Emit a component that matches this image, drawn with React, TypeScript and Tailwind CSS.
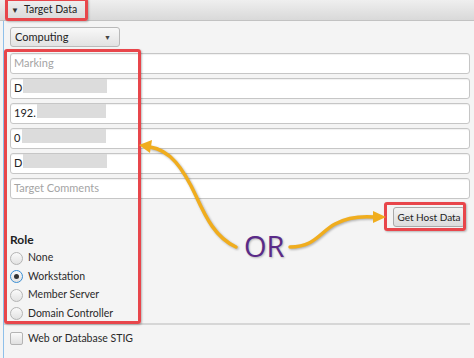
import React from 'react';

const FIELD =
  'h-[21px] w-full rounded-[3px] border border-[#c6c6c6] bg-white px-[3px] flex items-center text-[11px] shadow-[inset_0_1px_1px_rgba(0,0,0,0.06)]';

function Redacted({ w }: { w: number }) {
  return <span className="inline-block h-[14px] bg-[#dcdcdc] blur-[0.6px]" style={{ width: w }} />;
}

function Radio({ label, checked }: { label: string; checked?: boolean }) {
  return (
    <div className="flex items-center h-[18.5px] gap-[5px]">
      <span
        className={`w-[13px] h-[13px] rounded-full flex items-center justify-center bg-gradient-to-b from-[#fafafa] to-[#e2e2e2] ${
          checked ? 'border-[1.5px] border-[#3b8fd4]' : 'border border-[#b4b4b4]'
        }`}
      >
        {checked && <span className="w-[5px] h-[5px] rounded-full bg-[#333]" />}
      </span>
      <span className="text-[#2a2a2a]">{label}</span>
    </div>
  );
}

export default function App() {
  return (
    <div
      className="relative w-[474px] h-[358px] overflow-hidden bg-[#f4f4f4] text-[#222] text-[10.5px]"
      style={{ fontFamily: 'Lato, "Open Sans", sans-serif' }}
    >
      {/* title bar */}
      <div className="h-[21px] flex items-center pl-[11px] gap-[5px] text-[10.5px] bg-gradient-to-b from-[#efefef] to-[#d9d9d9] border-b border-[#c2c2c2]">
        <span className="text-[8px] text-[#333]">▼</span>
        <span>Target Data</span>
      </div>

      <div className="ml-[3px] border-l border-[#8fc0ea] h-[337px] pl-[6px] pr-[4px] pt-[6px]">
        <div className="w-[110px] h-[20px] rounded-[3px] border border-[#b9b9b9] bg-gradient-to-b from-[#f8f8f8] to-[#e2e2e2] flex items-center justify-between px-[4px] text-[11px]">
          <span>Computing</span>
          <span className="text-[7px] text-[#444] mr-[4px]">▼</span>
        </div>

        <div className="mt-[6px] flex flex-col gap-[4px]">
          <div className={FIELD}>
            <span className="text-[#a4a4a4]">Marking</span>
          </div>
          <div className={FIELD}>
            <span>D</span>
            <span className="ml-[1px]"><Redacted w={84} /></span>
          </div>
          <div className={FIELD}>
            <span>192.</span>
            <span className="ml-[1px]"><Redacted w={69} /></span>
          </div>
          <div className={FIELD}>
            <span>0</span>
            <span className="ml-[2px]"><Redacted w={84} /></span>
          </div>
          <div className={FIELD}>
            <span>D</span>
            <span className="ml-[1px]"><Redacted w={84} /></span>
          </div>
          <div className={FIELD}>
            <span className="text-[#a4a4a4]">Target Comments</span>
          </div>
        </div>

        <div className="flex justify-end mt-[8px] pr-[5px]">
          <button className="w-[72px] h-[20px] whitespace-nowrap flex items-center justify-center rounded-[3px] border border-[#a9a9a9] bg-gradient-to-b from-[#f4f4f4] to-[#dcdcdc] text-[10px]">
            Get Host Data
          </button>
        </div>

        <div className="mt-[5px] font-bold text-[12px] leading-[16px]">Role</div>
        <div className="mt-[1px]">
          <Radio label="None" />
          <Radio label="Workstation" checked />
          <Radio label="Member Server" />
          <Radio label="Domain Controller" />
        </div>

        <div className="-ml-[6px] border-t-2 border-[#d6d6d6]" />
        <div className="mt-[6px] flex items-center gap-[5px]">
          <span className="w-[13px] h-[13px] rounded-[2px] border border-[#b4b4b4] bg-gradient-to-b from-[#fafafa] to-[#e0e0e0]" />
          <span className="text-[#2a2a2a]">Web or Database STIG</span>
        </div>
      </div>

      {/* annotations */}
      <div className="absolute left-[5px] top-[-2px] w-[83px] h-[23px] border-[3px] border-[#e8464b] rounded-[3px] shadow-[1px_1px_2px_rgba(0,0,0,0.25)]" />
      <div className="absolute left-[4px] top-[49px] w-[137px] h-[275px] border-[3px] border-[#e8464b] rounded-[3px] shadow-[1px_1px_2px_rgba(0,0,0,0.25)]" />
      <div className="absolute left-[384px] top-[202px] w-[82px] h-[29px] border-[3px] border-[#e8464b] rounded-[3px] shadow-[1px_1px_2px_rgba(0,0,0,0.25)]" />

      <svg className="absolute left-0 top-0" width="474" height="358">
        <g stroke="#f0ad1e" strokeWidth="3.5" fill="none" strokeLinecap="round" style={{ filter: 'drop-shadow(1px 1px 1px rgba(0,0,0,0.3))' }}>
          <path d="M236,247 C 216,238 206,218 196,196 C 183,168 170,150 150,147" />
          <path d="M290,247 C 315,247 320,232 335,224 C 348,217 360,216 374,217" />
        </g>
        <polygon points="139,145 152,140 150,153" fill="#f0ad1e" />
        <polygon points="386,217 373,211 373,223" fill="#f0ad1e" />
      </svg>

      <div
        className="absolute left-[244px] top-[230px] text-[29px] leading-[32px] text-[#5a2a88]"
        style={{ fontFamily: '"Open Sans", sans-serif', textShadow: '1px 1px 2px rgba(0,0,0,0.25)' }}
      >
        OR
      </div>
    </div>
  );
}
